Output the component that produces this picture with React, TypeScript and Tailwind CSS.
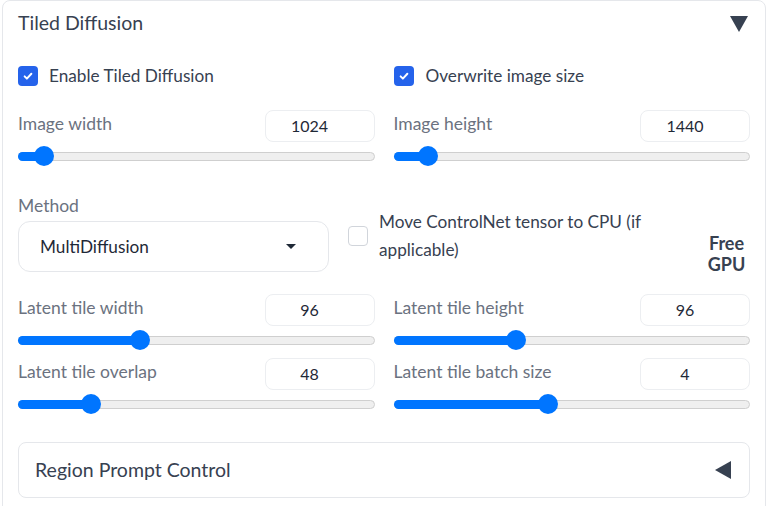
import React from "react";

const font = { fontFamily: "Lato, 'Noto Sans', sans-serif" };

function Check({ checked }: { checked: boolean }) {
  if (checked) {
    return (
      <span className="flex h-[20px] w-[20px] shrink-0 items-center justify-center rounded-[4px] bg-[#2563eb]">
        <svg width="12" height="12" viewBox="0 0 16 16" fill="none">
          <path d="M3.5 8.5l3 3 6-6.5" stroke="white" strokeWidth="2.6" strokeLinecap="round" strokeLinejoin="round" />
        </svg>
      </span>
    );
  }
  return <span className="block h-[20px] w-[20px] shrink-0 rounded-[4px] border border-[#d1d5db] bg-white" />;
}

function Slider({ label, value, min, max }: { label: string; value: number; min: number; max: number }) {
  const frac = (value - min) / (max - min);
  return (
    <div className="flex flex-col">
      <div className="flex h-[32px] items-center justify-between">
        <span className="-mt-[4px] text-[17.5px] text-[#6b7280]">{label}</span>
        <div className="flex h-[32px] w-[110px] items-center justify-center rounded-lg border border-[#eceef1] bg-white pr-[20px] text-[16px] text-[#1f2937]">
          {value}
        </div>
      </div>
      <div className="relative mt-[4px] h-[20px]">
        <div className="absolute left-0 right-0 top-[5.5px] h-[9px] rounded-full border border-[#cfcfcf] bg-[#efefef]" />
        <div
          className="absolute left-0 top-[5.5px] h-[9px] rounded-full bg-[#0075ff]"
          style={{ width: `calc(${frac} * (100% - 20px) + 10px)` }}
        />
        <div
          className="absolute top-0 h-[20px] w-[20px] rounded-full bg-[#0075ff]"
          style={{ left: `calc(${frac} * (100% - 20px))` }}
        />
      </div>
    </div>
  );
}

export default function App() {
  return (
    <div className="h-[506px] w-[768px] overflow-hidden bg-white" style={font}>
      <div className="mx-[2px] h-[560px] rounded-lg border border-[#e5e7eb] px-[15px]">
        <div className="flex h-[45px] items-center justify-between">
          <span className="-mt-[1px] text-[19.5px] text-[#374151]">Tiled Diffusion</span>
          <svg width="18" height="16" viewBox="0 0 18 16" className="mr-[2px] mt-[1px]">
            <polygon points="0,0 18,0 9,16" fill="#374151" />
          </svg>
        </div>

        <div className="mt-[18px] grid h-[20px] grid-cols-2 gap-x-[19px]">
          <label className="flex items-center gap-[11px]">
            <Check checked />
            <span className="-mt-[1px] text-[17.2px] text-[#374151]">Enable Tiled Diffusion</span>
          </label>
          <label className="flex items-center gap-[12px]">
            <Check checked />
            <span className="-mt-[1px] text-[17.2px] text-[#374151]">Overwrite image size</span>
          </label>
        </div>

        <div className="mt-[26px] grid grid-cols-2 gap-x-[19px]">
          <Slider label="Image width" value={1024} min={256} max={16384} />
          <Slider label="Image height" value={1440} min={256} max={16384} />
        </div>

        <div className="mt-[30px] flex">
          <div className="flex w-[311px] flex-col">
            <span className="-mt-[2px] h-[24px] text-[17.5px] leading-[24px] text-[#6b7280]">Method</span>
            <div className="mt-[3px] flex h-[51px] items-center justify-between rounded-xl border border-[#e5e7eb] bg-white pl-[21px] pr-[32px]">
              <span className="text-[17.2px] text-[#1f2937]">MultiDiffusion</span>
              <svg width="10" height="5" viewBox="0 0 10 5">
                <polygon points="0,0 10,0 5,5" fill="#1f2937" />
              </svg>
            </div>
          </div>
          <div className="ml-[19px] mt-[12px] flex w-[300px] items-start gap-[11px]">
            <span className="mt-[18px] block">
              <Check checked={false} />
            </span>
            <span className="text-[17.2px] leading-[28px] text-[#374151]">
              <span className="whitespace-nowrap">Move ControlNet tensor to CPU (if</span>
              <br />
              <span className="whitespace-nowrap">applicable)</span>
            </span>
          </div>
          <div className="ml-auto mt-[27px] flex h-[49px] w-[47px] flex-col items-center rounded-lg bg-white pt-[10px] text-[18px] font-bold leading-[21px] text-[#374151]">
            <span>Free</span>
            <span>GPU</span>
          </div>
        </div>

        <div className="mt-[22px] grid grid-cols-2 gap-x-[19px]">
          <Slider label="Latent tile width" value={96} min={16} max={256} />
          <Slider label="Latent tile height" value={96} min={16} max={256} />
        </div>

        <div className="mt-[8px] grid grid-cols-2 gap-x-[19px]">
          <Slider label="Latent tile overlap" value={48} min={0} max={256} />
          <Slider label="Latent tile batch size" value={4} min={1} max={8} />
        </div>

        <div className="mt-[28px] flex h-[56px] items-center justify-between rounded-lg border border-[#e5e7eb] pl-[16px] pr-[18px]">
          <span className="-mt-[1px] text-[19.5px] text-[#374151]">Region Prompt Control</span>
          <svg width="16" height="18" viewBox="0 0 16 18">
            <polygon points="16,0 16,18 0,9" fill="#374151" />
          </svg>
        </div>
      </div>
    </div>
  );
}
